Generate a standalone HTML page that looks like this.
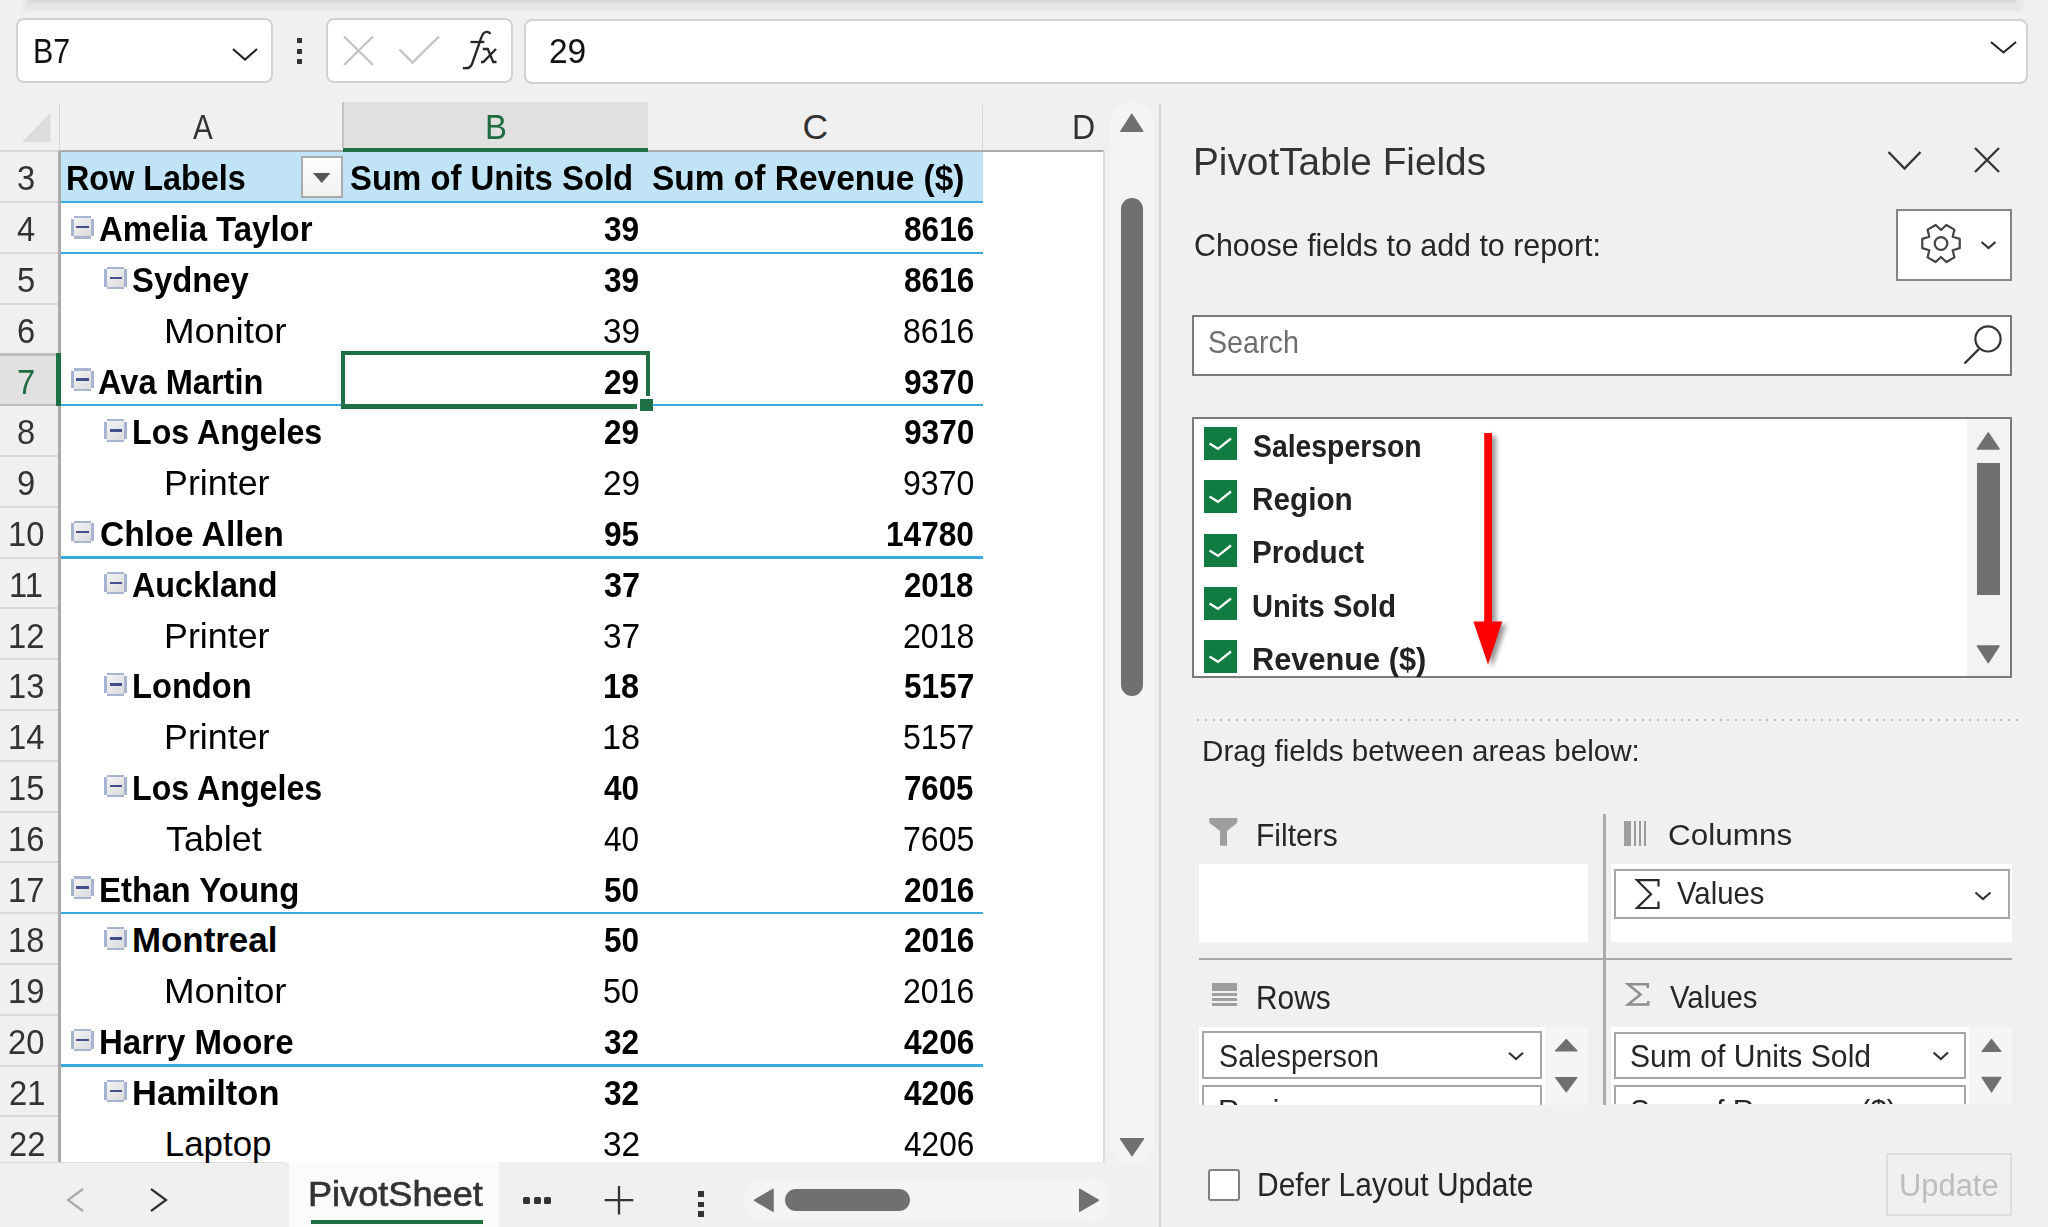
<!DOCTYPE html>
<html><head><meta charset="utf-8"><style>
html,body{margin:0;padding:0;}
body{width:2048px;height:1227px;position:relative;overflow:hidden;background:#f0f0f0;font-family:"Liberation Sans",sans-serif;}
.b{position:absolute;}
.t{position:absolute;white-space:pre;line-height:1;transform-origin:0 0;color:#000;}
</style></head><body>
<div class=b style="left:28.00px;top:0.00px;width:1988.00px;height:13.00px;background:linear-gradient(#d8d8d8 0px,#dbdbdb 2px,#e4e4e4 3px,#e8e8e8 9px,#eeeeee 11px,#f0f0f0 13px);"></div>
<div class=b style="left:20.00px;top:0.00px;width:8.00px;height:12.00px;background:linear-gradient(90deg,rgba(216,216,216,0),rgba(216,216,216,0.5));"></div>
<div class=b style="left:2016.00px;top:0.00px;width:10.00px;height:12.00px;background:linear-gradient(90deg,rgba(216,216,216,0.5),rgba(216,216,216,0));"></div>
<div class=b style="left:15.50px;top:18.00px;width:257.50px;height:65.00px;background:#fff;border:2px solid #d2d2d2;border-radius:8px;box-sizing:border-box;"></div>
<svg class=b style="left:225.00px;top:40.00px;" width="40.00" height="28.00" viewBox="225.00 40.00 40.00 28.00"><polyline points="233,49 245,59.5 257,49" fill="none" stroke="#222" stroke-width="2.1"/></svg>
<div class=b style="left:297.25px;top:38.00px;width:5.00px;height:5.00px;background:#333;"></div>
<div class=b style="left:297.25px;top:48.50px;width:5.00px;height:5.00px;background:#333;"></div>
<div class=b style="left:297.25px;top:58.75px;width:5.00px;height:5.00px;background:#333;"></div>
<div class=b style="left:325.50px;top:18.00px;width:187.00px;height:65.00px;background:#fff;border:2px solid #d2d2d2;border-radius:8px;box-sizing:border-box;"></div>
<svg class=b style="left:335.00px;top:28.00px;" width="115.00" height="47.00" viewBox="335.00 28.00 115.00 47.00"><path d="M344,36.5 L373,65 M373,36.5 L344,65" stroke="#c3c3c3" stroke-width="2.4" fill="none"/><polyline points="399.5,49.5 412.5,62.5 439,36.5" fill="none" stroke="#c3c3c3" stroke-width="2.4"/></svg>
<svg class=b style="left:455.00px;top:25.00px;" width="50.00" height="50.00" viewBox="455.00 25.00 50.00 50.00"><path d="M490.5,34 C489,31.5 485.5,31.3 483.6,33.2 C482.2,34.6 481.6,36.5 481,38.5 L472.2,63.5 C471.2,66.5 469,68.2 466,68.2 L462.8,68.2" fill="none" stroke="#262626" stroke-width="2.3"/><path d="M470.5,42 H484.3" stroke="#262626" stroke-width="2.3"/><path d="M482.8,49 H487.8 L493.2,62 H496.5 M496,49 L483.3,62 H481" fill="none" stroke="#262626" stroke-width="2.3"/></svg>
<div class=b style="left:524.00px;top:18.50px;width:1504.00px;height:65.00px;background:#fff;border:2px solid #d2d2d2;border-radius:8px;box-sizing:border-box;"></div>
<svg class=b style="left:1980.00px;top:32.00px;" width="45.00" height="30.00" viewBox="1980.00 32.00 45.00 30.00"><polyline points="1991,42 2003.5,52.5 2016,42" fill="none" stroke="#222" stroke-width="2.1"/></svg>
<div class=b style="left:61.00px;top:152.00px;width:1042.50px;height:1009.50px;background:#fff;"></div>
<div class=b style="left:343.00px;top:102.00px;width:304.50px;height:46.00px;background:#e0e0e0;"></div>
<div class=b style="left:342.00px;top:102.00px;width:2.00px;height:46.00px;background:#c4c4c4;"></div>
<div class=b style="left:981.50px;top:105.00px;width:1.30px;height:46.00px;background:#d6d6d6;"></div>
<div class=b style="left:59.00px;top:104.00px;width:1.20px;height:47.00px;background:#d6d6d6;"></div>
<div class=b style="left:60.00px;top:150.00px;width:1044.00px;height:2.00px;background:#ababab;"></div>
<div class=b style="left:0.00px;top:150.30px;width:60.00px;height:1.70px;background:#d6d6d6;"></div>
<div class=b style="left:343.00px;top:147.50px;width:304.50px;height:4.50px;background:#1f7145;"></div>
<svg class=b style="left:20.00px;top:110.00px;" width="32.00" height="34.00" viewBox="20.00 110.00 32.00 34.00"><polygon points="22,142 50.6,142 50.6,112.5" fill="#dcdcdc"/></svg>
<div class=b style="left:58.30px;top:151.00px;width:2.70px;height:1010.50px;background:#ababab;"></div>
<div class=b style="left:0.00px;top:201.00px;width:58.30px;height:2.00px;background:#d9d9d9;"></div>
<div class=b style="left:0.00px;top:251.80px;width:58.30px;height:2.00px;background:#d9d9d9;"></div>
<div class=b style="left:0.00px;top:302.60px;width:58.30px;height:2.00px;background:#d9d9d9;"></div>
<div class=b style="left:0.00px;top:353.40px;width:58.30px;height:2.00px;background:#d9d9d9;"></div>
<div class=b style="left:0.00px;top:404.20px;width:58.30px;height:2.00px;background:#d9d9d9;"></div>
<div class=b style="left:0.00px;top:455.00px;width:58.30px;height:2.00px;background:#d9d9d9;"></div>
<div class=b style="left:0.00px;top:505.80px;width:58.30px;height:2.00px;background:#d9d9d9;"></div>
<div class=b style="left:0.00px;top:556.60px;width:58.30px;height:2.00px;background:#d9d9d9;"></div>
<div class=b style="left:0.00px;top:607.40px;width:58.30px;height:2.00px;background:#d9d9d9;"></div>
<div class=b style="left:0.00px;top:658.20px;width:58.30px;height:2.00px;background:#d9d9d9;"></div>
<div class=b style="left:0.00px;top:709.00px;width:58.30px;height:2.00px;background:#d9d9d9;"></div>
<div class=b style="left:0.00px;top:759.80px;width:58.30px;height:2.00px;background:#d9d9d9;"></div>
<div class=b style="left:0.00px;top:810.60px;width:58.30px;height:2.00px;background:#d9d9d9;"></div>
<div class=b style="left:0.00px;top:861.40px;width:58.30px;height:2.00px;background:#d9d9d9;"></div>
<div class=b style="left:0.00px;top:912.20px;width:58.30px;height:2.00px;background:#d9d9d9;"></div>
<div class=b style="left:0.00px;top:963.00px;width:58.30px;height:2.00px;background:#d9d9d9;"></div>
<div class=b style="left:0.00px;top:1013.80px;width:58.30px;height:2.00px;background:#d9d9d9;"></div>
<div class=b style="left:0.00px;top:1064.60px;width:58.30px;height:2.00px;background:#d9d9d9;"></div>
<div class=b style="left:0.00px;top:1115.40px;width:58.30px;height:2.00px;background:#d9d9d9;"></div>
<div class=b style="left:0.00px;top:1166.20px;width:58.30px;height:2.00px;background:#d9d9d9;"></div>
<div class=b style="left:0.00px;top:355.40px;width:58.30px;height:48.80px;background:#e1e1e1;"></div>
<div class=b style="left:0.00px;top:353.40px;width:56.00px;height:2.50px;background:#bdbdbd;"></div>
<div class=b style="left:0.00px;top:403.70px;width:56.00px;height:2.50px;background:#bdbdbd;"></div>
<div class=b style="left:56.00px;top:353.40px;width:5.00px;height:52.80px;background:#1f7145;"></div>
<div class=b style="left:1103.00px;top:151.00px;width:2.00px;height:1010.50px;background:#dcdcdc;"></div>
<div class=b style="left:61.00px;top:152.00px;width:922.00px;height:49.00px;background:#c0e4f5;"></div>
<div class=b style="left:61.00px;top:200.70px;width:922.00px;height:2.60px;background:#38a8dd;"></div>
<div class=b style="left:61.00px;top:251.50px;width:922.00px;height:2.60px;background:#38a8dd;"></div>
<div class=b style="left:61.00px;top:403.90px;width:922.00px;height:2.60px;background:#38a8dd;"></div>
<div class=b style="left:61.00px;top:556.30px;width:922.00px;height:2.60px;background:#38a8dd;"></div>
<div class=b style="left:61.00px;top:911.90px;width:922.00px;height:2.60px;background:#38a8dd;"></div>
<div class=b style="left:61.00px;top:1064.30px;width:922.00px;height:2.60px;background:#38a8dd;"></div>
<div class=b style="left:300.50px;top:155.60px;width:42.50px;height:42.00px;background:linear-gradient(#fdfdfd,#f1f1f1);border:2px solid #ababab;box-sizing:border-box;"></div>
<svg class=b style="left:310.00px;top:170.00px;" width="24.00" height="16.00" viewBox="310.00 170.00 24.00 16.00"><polygon points="313,173 330.5,173 321.75,183" fill="#555"/></svg>
<div class=b style="left:73.60px;top:218.00px;width:17.80px;height:18.60px;background:linear-gradient(135deg,#f4f4f4,#dadada);"></div>
<div class=b style="left:74.10px;top:216.00px;width:16.80px;height:2.30px;background:#a6b4d2;"></div>
<div class=b style="left:74.10px;top:236.30px;width:16.80px;height:2.30px;background:#a6b4d2;"></div>
<div class=b style="left:71.10px;top:218.60px;width:2.80px;height:17.40px;background:#a6b4d2;"></div>
<div class=b style="left:91.10px;top:218.60px;width:2.80px;height:17.40px;background:#a6b4d2;"></div>
<div class=b style="left:76.30px;top:225.90px;width:12.60px;height:2.50px;background:#434e8c;"></div>
<div class=b style="left:73.60px;top:370.40px;width:17.80px;height:18.60px;background:linear-gradient(135deg,#f4f4f4,#dadada);"></div>
<div class=b style="left:74.10px;top:368.40px;width:16.80px;height:2.30px;background:#a6b4d2;"></div>
<div class=b style="left:74.10px;top:388.70px;width:16.80px;height:2.30px;background:#a6b4d2;"></div>
<div class=b style="left:71.10px;top:371.00px;width:2.80px;height:17.40px;background:#a6b4d2;"></div>
<div class=b style="left:91.10px;top:371.00px;width:2.80px;height:17.40px;background:#a6b4d2;"></div>
<div class=b style="left:76.30px;top:378.30px;width:12.60px;height:2.50px;background:#434e8c;"></div>
<div class=b style="left:73.60px;top:522.80px;width:17.80px;height:18.60px;background:linear-gradient(135deg,#f4f4f4,#dadada);"></div>
<div class=b style="left:74.10px;top:520.80px;width:16.80px;height:2.30px;background:#a6b4d2;"></div>
<div class=b style="left:74.10px;top:541.10px;width:16.80px;height:2.30px;background:#a6b4d2;"></div>
<div class=b style="left:71.10px;top:523.40px;width:2.80px;height:17.40px;background:#a6b4d2;"></div>
<div class=b style="left:91.10px;top:523.40px;width:2.80px;height:17.40px;background:#a6b4d2;"></div>
<div class=b style="left:76.30px;top:530.70px;width:12.60px;height:2.50px;background:#434e8c;"></div>
<div class=b style="left:73.60px;top:878.40px;width:17.80px;height:18.60px;background:linear-gradient(135deg,#f4f4f4,#dadada);"></div>
<div class=b style="left:74.10px;top:876.40px;width:16.80px;height:2.30px;background:#a6b4d2;"></div>
<div class=b style="left:74.10px;top:896.70px;width:16.80px;height:2.30px;background:#a6b4d2;"></div>
<div class=b style="left:71.10px;top:879.00px;width:2.80px;height:17.40px;background:#a6b4d2;"></div>
<div class=b style="left:91.10px;top:879.00px;width:2.80px;height:17.40px;background:#a6b4d2;"></div>
<div class=b style="left:76.30px;top:886.30px;width:12.60px;height:2.50px;background:#434e8c;"></div>
<div class=b style="left:73.60px;top:1030.80px;width:17.80px;height:18.60px;background:linear-gradient(135deg,#f4f4f4,#dadada);"></div>
<div class=b style="left:74.10px;top:1028.80px;width:16.80px;height:2.30px;background:#a6b4d2;"></div>
<div class=b style="left:74.10px;top:1049.10px;width:16.80px;height:2.30px;background:#a6b4d2;"></div>
<div class=b style="left:71.10px;top:1031.40px;width:2.80px;height:17.40px;background:#a6b4d2;"></div>
<div class=b style="left:91.10px;top:1031.40px;width:2.80px;height:17.40px;background:#a6b4d2;"></div>
<div class=b style="left:76.30px;top:1038.70px;width:12.60px;height:2.50px;background:#434e8c;"></div>
<div class=b style="left:106.80px;top:268.80px;width:17.80px;height:18.60px;background:linear-gradient(135deg,#f4f4f4,#dadada);"></div>
<div class=b style="left:107.30px;top:266.80px;width:16.80px;height:2.30px;background:#a6b4d2;"></div>
<div class=b style="left:107.30px;top:287.10px;width:16.80px;height:2.30px;background:#a6b4d2;"></div>
<div class=b style="left:104.30px;top:269.40px;width:2.80px;height:17.40px;background:#a6b4d2;"></div>
<div class=b style="left:124.30px;top:269.40px;width:2.80px;height:17.40px;background:#a6b4d2;"></div>
<div class=b style="left:109.50px;top:276.70px;width:12.60px;height:2.50px;background:#434e8c;"></div>
<div class=b style="left:106.80px;top:421.20px;width:17.80px;height:18.60px;background:linear-gradient(135deg,#f4f4f4,#dadada);"></div>
<div class=b style="left:107.30px;top:419.20px;width:16.80px;height:2.30px;background:#a6b4d2;"></div>
<div class=b style="left:107.30px;top:439.50px;width:16.80px;height:2.30px;background:#a6b4d2;"></div>
<div class=b style="left:104.30px;top:421.80px;width:2.80px;height:17.40px;background:#a6b4d2;"></div>
<div class=b style="left:124.30px;top:421.80px;width:2.80px;height:17.40px;background:#a6b4d2;"></div>
<div class=b style="left:109.50px;top:429.10px;width:12.60px;height:2.50px;background:#434e8c;"></div>
<div class=b style="left:106.80px;top:573.60px;width:17.80px;height:18.60px;background:linear-gradient(135deg,#f4f4f4,#dadada);"></div>
<div class=b style="left:107.30px;top:571.60px;width:16.80px;height:2.30px;background:#a6b4d2;"></div>
<div class=b style="left:107.30px;top:591.90px;width:16.80px;height:2.30px;background:#a6b4d2;"></div>
<div class=b style="left:104.30px;top:574.20px;width:2.80px;height:17.40px;background:#a6b4d2;"></div>
<div class=b style="left:124.30px;top:574.20px;width:2.80px;height:17.40px;background:#a6b4d2;"></div>
<div class=b style="left:109.50px;top:581.50px;width:12.60px;height:2.50px;background:#434e8c;"></div>
<div class=b style="left:106.80px;top:675.20px;width:17.80px;height:18.60px;background:linear-gradient(135deg,#f4f4f4,#dadada);"></div>
<div class=b style="left:107.30px;top:673.20px;width:16.80px;height:2.30px;background:#a6b4d2;"></div>
<div class=b style="left:107.30px;top:693.50px;width:16.80px;height:2.30px;background:#a6b4d2;"></div>
<div class=b style="left:104.30px;top:675.80px;width:2.80px;height:17.40px;background:#a6b4d2;"></div>
<div class=b style="left:124.30px;top:675.80px;width:2.80px;height:17.40px;background:#a6b4d2;"></div>
<div class=b style="left:109.50px;top:683.10px;width:12.60px;height:2.50px;background:#434e8c;"></div>
<div class=b style="left:106.80px;top:776.80px;width:17.80px;height:18.60px;background:linear-gradient(135deg,#f4f4f4,#dadada);"></div>
<div class=b style="left:107.30px;top:774.80px;width:16.80px;height:2.30px;background:#a6b4d2;"></div>
<div class=b style="left:107.30px;top:795.10px;width:16.80px;height:2.30px;background:#a6b4d2;"></div>
<div class=b style="left:104.30px;top:777.40px;width:2.80px;height:17.40px;background:#a6b4d2;"></div>
<div class=b style="left:124.30px;top:777.40px;width:2.80px;height:17.40px;background:#a6b4d2;"></div>
<div class=b style="left:109.50px;top:784.70px;width:12.60px;height:2.50px;background:#434e8c;"></div>
<div class=b style="left:106.80px;top:929.20px;width:17.80px;height:18.60px;background:linear-gradient(135deg,#f4f4f4,#dadada);"></div>
<div class=b style="left:107.30px;top:927.20px;width:16.80px;height:2.30px;background:#a6b4d2;"></div>
<div class=b style="left:107.30px;top:947.50px;width:16.80px;height:2.30px;background:#a6b4d2;"></div>
<div class=b style="left:104.30px;top:929.80px;width:2.80px;height:17.40px;background:#a6b4d2;"></div>
<div class=b style="left:124.30px;top:929.80px;width:2.80px;height:17.40px;background:#a6b4d2;"></div>
<div class=b style="left:109.50px;top:937.10px;width:12.60px;height:2.50px;background:#434e8c;"></div>
<div class=b style="left:106.80px;top:1081.60px;width:17.80px;height:18.60px;background:linear-gradient(135deg,#f4f4f4,#dadada);"></div>
<div class=b style="left:107.30px;top:1079.60px;width:16.80px;height:2.30px;background:#a6b4d2;"></div>
<div class=b style="left:107.30px;top:1099.90px;width:16.80px;height:2.30px;background:#a6b4d2;"></div>
<div class=b style="left:104.30px;top:1082.20px;width:2.80px;height:17.40px;background:#a6b4d2;"></div>
<div class=b style="left:124.30px;top:1082.20px;width:2.80px;height:17.40px;background:#a6b4d2;"></div>
<div class=b style="left:109.50px;top:1089.50px;width:12.60px;height:2.50px;background:#434e8c;"></div>
<div class=b style="left:341.30px;top:350.80px;width:309.10px;height:58.00px;border:4.7px solid #1f7145;box-sizing:border-box;"></div>
<div class=b style="left:341.30px;top:403.60px;width:298.70px;height:5.20px;background:#1f7145;"></div>
<div class=b style="left:637.40px;top:396.40px;width:15.50px;height:17.50px;background:#fff;"></div>
<div class=b style="left:640.10px;top:399.00px;width:12.80px;height:12.40px;background:#1f7145;"></div>
<div class=b style="left:1110.00px;top:101.40px;width:43.60px;height:1064.60px;background:#f4f4f4;border-radius:22px;"></div>
<svg class=b style="left:1118.00px;top:112.00px;" width="28.00" height="22.00" viewBox="1118.00 112.00 28.00 22.00"><polygon points="1120.8,131.3 1142.8,131.3 1131.8,114.5" fill="#707070" stroke="#707070" stroke-width="1.5" stroke-linejoin="round"/></svg>
<div class=b style="left:1120.80px;top:198.00px;width:22.50px;height:498.00px;background:#707070;border-radius:11px;"></div>
<svg class=b style="left:1118.00px;top:1136.00px;" width="28.00" height="22.00" viewBox="1118.00 1136.00 28.00 22.00"><polygon points="1120.5,1138.7 1143.5,1138.7 1132,1155.6" fill="#707070" stroke="#707070" stroke-width="1.5" stroke-linejoin="round"/></svg>
<div class=b style="left:1159.00px;top:104.00px;width:2.20px;height:1123.00px;background:#d4d4d4;"></div>
<div class=b style="left:0.00px;top:1161.50px;width:289.00px;height:65.50px;background:#f0f0f0;border-top-right-radius:8px;border-top:1.5px solid #dcdcdc;box-sizing:border-box;"></div>
<div class=b style="left:289.00px;top:1161.50px;width:209.50px;height:65.50px;background:#fbfbfb;"></div>
<div class=b style="left:498.50px;top:1161.50px;width:660.50px;height:65.50px;background:#f0f0f0;"></div>
<svg class=b style="left:60.00px;top:1183.00px;" width="30.00" height="33.00" viewBox="60.00 1183.00 30.00 33.00"><polyline points="83,1189 68,1200 83,1211" fill="none" stroke="#a8a8a8" stroke-width="2.2"/></svg>
<svg class=b style="left:145.00px;top:1183.00px;" width="27.00" height="33.00" viewBox="145.00 1183.00 27.00 33.00"><polyline points="151,1189 166,1200 151,1211" fill="none" stroke="#333" stroke-width="2.2"/></svg>
<div class=b style="left:311.00px;top:1219.50px;width:171.50px;height:4.80px;background:#1f7145;"></div>
<div class=b style="left:523.00px;top:1196.50px;width:7.40px;height:7.50px;background:#333;border-radius:1.5px;"></div>
<div class=b style="left:533.50px;top:1196.50px;width:7.40px;height:7.50px;background:#333;border-radius:1.5px;"></div>
<div class=b style="left:544.00px;top:1196.50px;width:7.40px;height:7.50px;background:#333;border-radius:1.5px;"></div>
<svg class=b style="left:600.00px;top:1182.00px;" width="40.00" height="36.00" viewBox="600.00 1182.00 40.00 36.00"><path d="M604.7,1200.2 H633.3 M619,1185.9 V1214.6" stroke="#333" stroke-width="2.3"/></svg>
<div class=b style="left:698.30px;top:1191.00px;width:5.70px;height:5.70px;background:#333;"></div>
<div class=b style="left:698.30px;top:1201.50px;width:5.70px;height:5.70px;background:#333;"></div>
<div class=b style="left:698.30px;top:1211.30px;width:5.70px;height:5.70px;background:#333;"></div>
<div class=b style="left:742.80px;top:1179.20px;width:367.20px;height:42.10px;background:#f4f4f4;border-radius:21px;"></div>
<svg class=b style="left:750.00px;top:1186.00px;" width="27.00" height="28.00" viewBox="750.00 1186.00 27.00 28.00"><polygon points="773,1189.3 773,1211.2 754.6,1200.25" fill="#707070" stroke="#707070" stroke-width="1.5" stroke-linejoin="round"/></svg>
<div class=b style="left:785.00px;top:1189.30px;width:124.60px;height:21.90px;background:#707070;border-radius:11px;"></div>
<svg class=b style="left:1076.00px;top:1186.00px;" width="26.00" height="28.00" viewBox="1076.00 1186.00 26.00 28.00"><polygon points="1079.7,1189.3 1079.7,1211.2 1098.3,1200.25" fill="#707070" stroke="#707070" stroke-width="1.5" stroke-linejoin="round"/></svg>
<svg class=b style="left:1880.00px;top:140.00px;" width="50.00" height="38.00" viewBox="1880.00 140.00 50.00 38.00"><polyline points="1888.5,152 1904.5,168.5 1920.5,152" fill="none" stroke="#333" stroke-width="2.3"/></svg>
<svg class=b style="left:1968.00px;top:140.00px;" width="40.00" height="40.00" viewBox="1968.00 140.00 40.00 40.00"><path d="M1975,148 L1999,172 M1999,148 L1975,172" stroke="#333" stroke-width="2.3"/></svg>
<div class=b style="left:1896.00px;top:208.80px;width:116.00px;height:72.50px;background:#fff;border:2.2px solid #868686;box-sizing:border-box;"></div>
<svg class=b style="left:1915.00px;top:218.00px;" width="53.00" height="52.00" viewBox="1915.00 218.00 53.00 52.00"><polygon points="1959.73,238.83 1959.73,248.17 1952.69,250.25 1954.41,257.38 1946.32,262.05 1941.00,257.00 1935.68,262.05 1927.59,257.38 1929.31,250.25 1922.27,248.17 1922.27,238.83 1929.31,236.75 1927.59,229.62 1935.68,224.95 1941.00,230.00 1946.32,224.95 1954.41,229.62 1952.69,236.75" fill="none" stroke="#444" stroke-width="2.2" stroke-linejoin="round"/><circle cx="1941" cy="243.5" r="6.3" fill="none" stroke="#444" stroke-width="2.2"/></svg>
<svg class=b style="left:1976.00px;top:236.00px;" width="26.00" height="18.00" viewBox="1976.00 236.00 26.00 18.00"><polyline points="1981.5,242 1988.5,248 1995.5,242" fill="none" stroke="#333" stroke-width="2.2"/></svg>
<div class=b style="left:1192.00px;top:315.00px;width:820.00px;height:60.60px;background:#fff;border:2px solid #7a7a7a;box-sizing:border-box;"></div>
<svg class=b style="left:1955.00px;top:318.00px;" width="53.00" height="54.00" viewBox="1955.00 318.00 53.00 54.00"><circle cx="1988" cy="338.9" r="12.6" fill="none" stroke="#333" stroke-width="2.2"/><path d="M1979,349 L1964.5,363.5" stroke="#333" stroke-width="2.4"/></svg>
<div class=b style="left:1192.00px;top:416.70px;width:820.00px;height:261.50px;background:#fff;border:2px solid #7a7a7a;box-sizing:border-box;"></div>
<div class=b style="left:1967.00px;top:419.00px;width:43.00px;height:257.20px;background:#f3f3f3;"></div>
<svg class=b style="left:1972.00px;top:428.00px;" width="32.00" height="24.00" viewBox="1972.00 428.00 32.00 24.00"><polygon points="1977.5,449 1999,449 1988.25,433" fill="#707070" stroke="#707070" stroke-width="1.5" stroke-linejoin="round"/></svg>
<div class=b style="left:1977.40px;top:462.60px;width:22.60px;height:132.40px;background:#707070;"></div>
<svg class=b style="left:1972.00px;top:642.00px;" width="32.00" height="26.00" viewBox="1972.00 642.00 32.00 26.00"><polygon points="1977.5,646 1999,646 1988.25,662.5" fill="#707070" stroke="#707070" stroke-width="1.5" stroke-linejoin="round"/></svg>
<div class=b style="left:1204.40px;top:426.50px;width:33.00px;height:33.00px;background:#107c41;"></div>
<svg class=b style="left:1204.40px;top:426.50px;" width="33.00" height="33.00" viewBox="1204.40 426.50 33.00 33.00"><polyline points="1209.90,443.10 1218.40,448.30 1231.40,438.00" fill="none" stroke="#fff" stroke-width="2.3"/></svg>
<div class=b style="left:1204.40px;top:480.10px;width:33.00px;height:33.00px;background:#107c41;"></div>
<svg class=b style="left:1204.40px;top:480.10px;" width="33.00" height="33.00" viewBox="1204.40 480.10 33.00 33.00"><polyline points="1209.90,496.70 1218.40,501.90 1231.40,491.60" fill="none" stroke="#fff" stroke-width="2.3"/></svg>
<div class=b style="left:1204.40px;top:533.70px;width:33.00px;height:33.00px;background:#107c41;"></div>
<svg class=b style="left:1204.40px;top:533.70px;" width="33.00" height="33.00" viewBox="1204.40 533.70 33.00 33.00"><polyline points="1209.90,550.30 1218.40,555.50 1231.40,545.20" fill="none" stroke="#fff" stroke-width="2.3"/></svg>
<div class=b style="left:1204.40px;top:587.10px;width:33.00px;height:33.00px;background:#107c41;"></div>
<svg class=b style="left:1204.40px;top:587.10px;" width="33.00" height="33.00" viewBox="1204.40 587.10 33.00 33.00"><polyline points="1209.90,603.70 1218.40,608.90 1231.40,598.60" fill="none" stroke="#fff" stroke-width="2.3"/></svg>
<div class=b style="left:1204.40px;top:640.30px;width:33.00px;height:33.00px;background:#107c41;"></div>
<svg class=b style="left:1204.40px;top:640.30px;" width="33.00" height="33.00" viewBox="1204.40 640.30 33.00 33.00"><polyline points="1209.90,656.90 1218.40,662.10 1231.40,651.80" fill="none" stroke="#fff" stroke-width="2.3"/></svg>
<svg class=b style="left:1465.00px;top:425.00px;filter:drop-shadow(4px 3px 2.5px rgba(0,0,0,0.42));" width="50.00" height="255.00" viewBox="1465.00 425.00 50.00 255.00"><path d="M1488.1,433 V624" stroke="#ff0000" stroke-width="7.8"/><polygon points="1473.4,621.4 1502.3,621.4 1488,664.4" fill="#ff0000"/></svg>
<div class=b style="left:1196.80px;top:719.30px;width:827.20px;height:2.00px;background:repeating-linear-gradient(90deg,#bdbdbd 0 2px,transparent 2px 7.8px);"></div>
<svg class=b style="left:1205.00px;top:814.00px;" width="37.00" height="36.00" viewBox="1205.00 814.00 37.00 36.00"><polygon points="1209.3,818.1 1237.3,818.1 1237.3,822.7 1227,831 1227,845.7 1220,845.7 1220,831 1209.3,822.7" fill="#9e9e9e"/></svg>
<div class=b style="left:1199.00px;top:864.00px;width:388.70px;height:78.00px;background:#fff;"></div>
<div class=b style="left:1603.20px;top:813.50px;width:2.80px;height:291.10px;background:#ababab;"></div>
<div class=b style="left:1199.00px;top:957.50px;width:813.00px;height:2.00px;background:#a8a8a8;"></div>
<div class=b style="left:1623.80px;top:820.60px;width:7.20px;height:25.20px;background:#9e9e9e;"></div>
<div class=b style="left:1634.00px;top:820.60px;width:2.20px;height:25.20px;background:#9a9a9a;"></div>
<div class=b style="left:1639.10px;top:820.60px;width:2.20px;height:25.20px;background:#9a9a9a;"></div>
<div class=b style="left:1644.10px;top:820.60px;width:2.20px;height:25.20px;background:#9a9a9a;"></div>
<div class=b style="left:1611.20px;top:863.80px;width:401.00px;height:78.20px;background:#fff;"></div>
<div class=b style="left:1613.50px;top:868.70px;width:396.50px;height:50.50px;background:#fff;border:2px solid #a6a6a6;box-sizing:border-box;"></div>
<svg class=b style="left:1630.00px;top:874.00px;" width="35.00" height="40.00" viewBox="1630.00 874.00 35.00 40.00"><path d="M1658.5,886.5 V880.2 H1637 L1651,894.2 L1637,908 H1658.5 V901.5" fill="none" stroke="#2a2a2a" stroke-width="2.2"/></svg>
<svg class=b style="left:1970.00px;top:886.00px;" width="26.00" height="18.00" viewBox="1970.00 886.00 26.00 18.00"><polyline points="1975.5,892.5 1983,899 1990.5,892.5" fill="none" stroke="#333" stroke-width="2.2"/></svg>
<div class=b style="left:1212.10px;top:983.00px;width:25.00px;height:7.70px;background:#9e9e9e;"></div>
<div class=b style="left:1212.10px;top:993.10px;width:25.00px;height:2.70px;background:#9e9e9e;"></div>
<div class=b style="left:1212.10px;top:998.20px;width:25.00px;height:2.70px;background:#9e9e9e;"></div>
<div class=b style="left:1212.10px;top:1003.20px;width:25.00px;height:2.70px;background:#9e9e9e;"></div>
<div class=b style="left:1199.20px;top:1026.70px;width:345.60px;height:77.90px;background:#fff;"></div>
<div class=b style="left:1544.80px;top:1026.70px;width:43.10px;height:77.90px;background:#f5f5f5;"></div>
<div class=b style="left:1202.30px;top:1031.40px;width:340.00px;height:48.00px;background:#fff;border:2px solid #a6a6a6;box-sizing:border-box;"></div>
<div class=b style="left:1202.30px;top:1085.10px;width:340.00px;height:19.50px;background:#fff;border:2px solid #a6a6a6;box-sizing:border-box;border-bottom:none;"></div>
<svg class=b style="left:1503.00px;top:1048.00px;" width="27.00" height="16.00" viewBox="1503.00 1048.00 27.00 16.00"><polyline points="1509,1052.8 1516,1059 1523,1052.8" fill="none" stroke="#333" stroke-width="2.2"/></svg>
<svg class=b style="left:1550.00px;top:1035.00px;" width="32.00" height="61.00" viewBox="1550.00 1035.00 32.00 61.00"><polygon points="1555.5,1051 1577,1051 1566.25,1039.5" fill="#707070" stroke="#707070" stroke-width="1.2" stroke-linejoin="round"/><polygon points="1555.5,1077.5 1577,1077.5 1566.25,1092" fill="#707070" stroke="#707070" stroke-width="1.2" stroke-linejoin="round"/></svg>
<svg class=b style="left:1620.00px;top:978.00px;" width="35.00" height="34.00" viewBox="1620.00 978.00 35.00 34.00"><path d="M1647.8,988 V984.3 H1628 L1640.6,994.4 L1628,1004.6 H1648.2 V1001" fill="none" stroke="#8e8e8e" stroke-width="2.5"/></svg>
<div class=b style="left:1611.00px;top:1026.70px;width:358.30px;height:77.70px;background:#fff;"></div>
<div class=b style="left:1969.30px;top:1026.70px;width:43.10px;height:77.70px;background:#f5f5f5;"></div>
<div class=b style="left:1613.60px;top:1031.80px;width:352.80px;height:47.40px;background:#fff;border:2px solid #a6a6a6;box-sizing:border-box;"></div>
<div class=b style="left:1613.60px;top:1085.10px;width:352.80px;height:19.30px;background:#fff;border:2px solid #a6a6a6;box-sizing:border-box;border-bottom:none;"></div>
<svg class=b style="left:1927.00px;top:1047.00px;" width="28.00" height="17.00" viewBox="1927.00 1047.00 28.00 17.00"><polyline points="1933.5,1052.5 1940.8,1059 1948,1052.5" fill="none" stroke="#333" stroke-width="2.2"/></svg>
<svg class=b style="left:1976.00px;top:1034.00px;" width="31.00" height="62.00" viewBox="1976.00 1034.00 31.00 62.00"><polygon points="1982,1051.5 2001,1051.5 1991.5,1039.3" fill="#707070" stroke="#707070" stroke-width="1.2" stroke-linejoin="round"/><polygon points="1982,1077.3 2001,1077.3 1991.5,1092" fill="#707070" stroke="#707070" stroke-width="1.2" stroke-linejoin="round"/></svg>
<div class=b style="left:1207.60px;top:1169.00px;width:32.00px;height:31.60px;background:#fff;border:2.2px solid #808080;border-radius:3px;box-sizing:border-box;"></div>
<div class=b style="left:1885.70px;top:1153.30px;width:126.20px;height:62.90px;border:2.2px solid #dedede;box-sizing:border-box;"></div>
<div class=t style="left:33.03px;top:34.00px;font-size:35.46px;color:#111;transform:scaleX(0.8564);">B7</div>
<div class=t style="left:549.11px;top:34.00px;font-size:35.46px;color:#111;transform:scaleX(0.9444);">29</div>
<div class=t style="left:193.00px;top:110.00px;font-size:35.46px;color:#333;transform:scaleX(0.8333);">A</div>
<div class=t style="left:485.22px;top:110.00px;font-size:35.46px;color:#1f6b40;transform:scaleX(0.9263);">B</div>
<div class=t style="left:802.50px;top:110.00px;font-size:35.46px;color:#333;">C</div>
<div class=t style="left:1071.89px;top:110.00px;font-size:35.46px;color:#333;transform:scaleX(0.9048);">D</div>
<div class=t style="left:17.40px;top:160.40px;font-size:35.18px;color:#333;transform:scaleX(0.9300);">3</div>
<div class=t style="left:17.40px;top:211.20px;font-size:35.18px;color:#333;transform:scaleX(0.9300);">4</div>
<div class=t style="left:17.40px;top:262.00px;font-size:35.18px;color:#333;transform:scaleX(0.9300);">5</div>
<div class=t style="left:17.40px;top:312.80px;font-size:35.18px;color:#333;transform:scaleX(0.9300);">6</div>
<div class=t style="left:17.40px;top:363.60px;font-size:35.18px;color:#1f6b40;transform:scaleX(0.9300);">7</div>
<div class=t style="left:17.40px;top:414.40px;font-size:35.18px;color:#333;transform:scaleX(0.9300);">8</div>
<div class=t style="left:17.40px;top:465.20px;font-size:35.18px;color:#333;transform:scaleX(0.9300);">9</div>
<div class=t style="left:7.63px;top:516.00px;font-size:35.18px;color:#333;transform:scaleX(0.9300);">10</div>
<div class=t style="left:9.03px;top:566.80px;font-size:35.18px;color:#333;transform:scaleX(0.9300);">11</div>
<div class=t style="left:8.10px;top:617.60px;font-size:35.18px;color:#333;transform:scaleX(0.9300);">12</div>
<div class=t style="left:7.63px;top:668.40px;font-size:35.18px;color:#333;transform:scaleX(0.9300);">13</div>
<div class=t style="left:7.63px;top:719.20px;font-size:35.18px;color:#333;transform:scaleX(0.9300);">14</div>
<div class=t style="left:7.63px;top:770.00px;font-size:35.18px;color:#333;transform:scaleX(0.9300);">15</div>
<div class=t style="left:7.63px;top:820.80px;font-size:35.18px;color:#333;transform:scaleX(0.9300);">16</div>
<div class=t style="left:8.10px;top:871.60px;font-size:35.18px;color:#333;transform:scaleX(0.9300);">17</div>
<div class=t style="left:7.63px;top:922.40px;font-size:35.18px;color:#333;transform:scaleX(0.9300);">18</div>
<div class=t style="left:7.63px;top:973.20px;font-size:35.18px;color:#333;transform:scaleX(0.9300);">19</div>
<div class=t style="left:8.10px;top:1024.00px;font-size:35.18px;color:#333;transform:scaleX(0.9300);">20</div>
<div class=t style="left:8.56px;top:1074.80px;font-size:35.18px;color:#333;transform:scaleX(0.9300);">21</div>
<div class=t style="left:8.56px;top:1125.60px;font-size:35.18px;color:#333;transform:scaleX(0.9300);">22</div>
<div class=t style="left:65.74px;top:161.30px;font-size:34.89px;font-weight:700;transform:scaleX(0.9277);">Row Labels</div>
<div class=t style="left:349.96px;top:161.30px;font-size:34.89px;font-weight:700;transform:scaleX(0.9431);">Sum of Units Sold</div>
<div class=t style="left:652.44px;top:161.30px;font-size:34.89px;font-weight:700;transform:scaleX(0.9598);">Sum of Revenue ($)</div>
<div class=t style="left:98.86px;top:212.10px;font-size:34.89px;font-weight:700;transform:scaleX(0.9440);">Amelia Taylor</div>
<div class=t style="left:603.79px;top:212.10px;font-size:34.89px;font-weight:700;transform:scaleX(0.9054);">39</div>
<div class=t style="left:904.09px;top:212.10px;font-size:34.89px;font-weight:700;transform:scaleX(0.9067);">8616</div>
<div class=t style="left:131.86px;top:262.90px;font-size:34.89px;font-weight:700;transform:scaleX(0.9407);">Sydney</div>
<div class=t style="left:603.79px;top:262.90px;font-size:34.89px;font-weight:700;transform:scaleX(0.9054);">39</div>
<div class=t style="left:904.09px;top:262.90px;font-size:34.89px;font-weight:700;transform:scaleX(0.9067);">8616</div>
<div class=t style="left:163.74px;top:313.70px;font-size:34.89px;transform:scaleX(1.0540);">Monitor</div>
<div class=t style="left:602.79px;top:313.70px;font-size:34.89px;transform:scaleX(0.9571);">39</div>
<div class=t style="left:903.16px;top:313.70px;font-size:34.89px;transform:scaleX(0.9189);">8616</div>
<div class=t style="left:98.37px;top:364.50px;font-size:34.89px;font-weight:700;transform:scaleX(0.9345);">Ava Martin</div>
<div class=t style="left:603.79px;top:364.50px;font-size:34.89px;font-weight:700;transform:scaleX(0.9054);">29</div>
<div class=t style="left:904.09px;top:364.50px;font-size:34.89px;font-weight:700;transform:scaleX(0.9067);">9370</div>
<div class=t style="left:131.65px;top:415.30px;font-size:34.89px;font-weight:700;transform:scaleX(0.9232);">Los Angeles</div>
<div class=t style="left:603.79px;top:415.30px;font-size:34.89px;font-weight:700;transform:scaleX(0.9054);">29</div>
<div class=t style="left:904.09px;top:415.30px;font-size:34.89px;font-weight:700;transform:scaleX(0.9067);">9370</div>
<div class=t style="left:164.12px;top:466.10px;font-size:34.89px;transform:scaleX(1.0273);">Printer</div>
<div class=t style="left:602.79px;top:466.10px;font-size:34.89px;transform:scaleX(0.9571);">29</div>
<div class=t style="left:903.16px;top:466.10px;font-size:34.89px;transform:scaleX(0.9189);">9370</div>
<div class=t style="left:99.94px;top:516.90px;font-size:34.89px;font-weight:700;transform:scaleX(0.9649);">Chloe Allen</div>
<div class=t style="left:603.79px;top:516.90px;font-size:34.89px;font-weight:700;transform:scaleX(0.9054);">95</div>
<div class=t style="left:885.94px;top:516.90px;font-size:34.89px;font-weight:700;transform:scaleX(0.9069);">14780</div>
<div class=t style="left:131.67px;top:567.70px;font-size:34.89px;font-weight:700;transform:scaleX(0.9260);">Auckland</div>
<div class=t style="left:603.77px;top:567.70px;font-size:34.89px;font-weight:700;transform:scaleX(0.9306);">37</div>
<div class=t style="left:904.11px;top:567.70px;font-size:34.89px;font-weight:700;transform:scaleX(0.8947);">2018</div>
<div class=t style="left:164.12px;top:618.50px;font-size:34.89px;transform:scaleX(1.0273);">Printer</div>
<div class=t style="left:602.79px;top:618.50px;font-size:34.89px;transform:scaleX(0.9571);">37</div>
<div class=t style="left:903.16px;top:618.50px;font-size:34.89px;transform:scaleX(0.9189);">2018</div>
<div class=t style="left:132.13px;top:669.30px;font-size:34.89px;font-weight:700;transform:scaleX(0.9363);">London</div>
<div class=t style="left:602.84px;top:669.30px;font-size:34.89px;font-weight:700;transform:scaleX(0.9306);">18</div>
<div class=t style="left:904.09px;top:669.30px;font-size:34.89px;font-weight:700;transform:scaleX(0.9067);">5157</div>
<div class=t style="left:164.12px;top:720.10px;font-size:34.89px;transform:scaleX(1.0273);">Printer</div>
<div class=t style="left:601.74px;top:720.10px;font-size:34.89px;transform:scaleX(0.9853);">18</div>
<div class=t style="left:903.16px;top:720.10px;font-size:34.89px;transform:scaleX(0.9189);">5157</div>
<div class=t style="left:131.65px;top:770.90px;font-size:34.89px;font-weight:700;transform:scaleX(0.9232);">Los Angeles</div>
<div class=t style="left:603.79px;top:770.90px;font-size:34.89px;font-weight:700;transform:scaleX(0.9054);">40</div>
<div class=t style="left:904.11px;top:770.90px;font-size:34.89px;font-weight:700;transform:scaleX(0.8947);">7605</div>
<div class=t style="left:165.97px;top:821.70px;font-size:34.89px;transform:scaleX(1.0283);">Tablet</div>
<div class=t style="left:603.79px;top:821.70px;font-size:34.89px;transform:scaleX(0.9054);">40</div>
<div class=t style="left:903.16px;top:821.70px;font-size:34.89px;transform:scaleX(0.9189);">7605</div>
<div class=t style="left:99.31px;top:872.50px;font-size:34.89px;font-weight:700;transform:scaleX(0.9457);">Ethan Young</div>
<div class=t style="left:603.79px;top:872.50px;font-size:34.89px;font-weight:700;transform:scaleX(0.9054);">50</div>
<div class=t style="left:904.09px;top:872.50px;font-size:34.89px;font-weight:700;transform:scaleX(0.9067);">2016</div>
<div class=t style="left:132.00px;top:923.30px;font-size:34.89px;font-weight:700;">Montreal</div>
<div class=t style="left:603.79px;top:923.30px;font-size:34.89px;font-weight:700;transform:scaleX(0.9054);">50</div>
<div class=t style="left:904.09px;top:923.30px;font-size:34.89px;font-weight:700;transform:scaleX(0.9067);">2016</div>
<div class=t style="left:163.74px;top:974.10px;font-size:34.89px;transform:scaleX(1.0540);">Monitor</div>
<div class=t style="left:602.84px;top:974.10px;font-size:34.89px;transform:scaleX(0.9306);">50</div>
<div class=t style="left:903.16px;top:974.10px;font-size:34.89px;transform:scaleX(0.9189);">2016</div>
<div class=t style="left:99.31px;top:1024.90px;font-size:34.89px;font-weight:700;transform:scaleX(0.9470);">Harry Moore</div>
<div class=t style="left:603.79px;top:1024.90px;font-size:34.89px;font-weight:700;transform:scaleX(0.9054);">32</div>
<div class=t style="left:904.09px;top:1024.90px;font-size:34.89px;font-weight:700;transform:scaleX(0.9067);">4206</div>
<div class=t style="left:132.02px;top:1075.70px;font-size:34.89px;font-weight:700;transform:scaleX(0.9883);">Hamilton</div>
<div class=t style="left:603.79px;top:1075.70px;font-size:34.89px;font-weight:700;transform:scaleX(0.9054);">32</div>
<div class=t style="left:904.09px;top:1075.70px;font-size:34.89px;font-weight:700;transform:scaleX(0.9067);">4206</div>
<div class=t style="left:164.80px;top:1126.50px;font-size:34.89px;">Laptop</div>
<div class=t style="left:602.79px;top:1126.50px;font-size:34.89px;transform:scaleX(0.9571);">32</div>
<div class=t style="left:904.09px;top:1126.50px;font-size:34.89px;transform:scaleX(0.9067);">4206</div>
<div class=t style="left:308.19px;top:1177.25px;font-size:35.46px;color:#333;transform:scaleX(1.0193);-webkit-text-stroke:0.7px #333;">PivotSheet</div>
<div class=t style="left:1193.27px;top:142.00px;font-size:39.01px;color:#333;transform:scaleX(0.9940);">PivotTable Fields</div>
<div class=t style="left:1194.10px;top:230.25px;font-size:31.91px;color:#262626;transform:scaleX(0.9521);">Choose fields to add to report:</div>
<div class=t style="left:1208.18px;top:326.80px;font-size:31.49px;color:#6e6e6e;transform:scaleX(0.9104);">Search</div>
<div class=t style="left:1252.70px;top:430.50px;font-size:31.49px;font-weight:700;color:#222;transform:scaleX(0.9005);">Salesperson</div>
<div class=t style="left:1251.71px;top:483.90px;font-size:31.49px;font-weight:700;color:#222;transform:scaleX(0.9437);">Region</div>
<div class=t style="left:1251.72px;top:537.30px;font-size:31.49px;font-weight:700;color:#222;transform:scaleX(0.9419);">Product</div>
<div class=t style="left:1251.75px;top:590.70px;font-size:31.49px;font-weight:700;color:#222;transform:scaleX(0.9250);">Units Sold</div>
<div class=t style="left:1251.65px;top:644.10px;font-size:31.49px;font-weight:700;color:#222;transform:scaleX(0.9766);">Revenue ($)</div>
<div class=t style="left:1201.62px;top:736.10px;font-size:29.93px;color:#262626;transform:scaleX(0.9895);">Drag fields between areas below:</div>
<div class=t style="left:1255.71px;top:819.50px;font-size:31.21px;color:#262626;transform:scaleX(0.9630);">Filters</div>
<div class=t style="left:1668.42px;top:819.80px;font-size:30.21px;color:#262626;transform:scaleX(1.0414);">Columns</div>
<div class=t style="left:1677.20px;top:878.00px;font-size:31.63px;color:#262626;transform:scaleX(0.9258);">Values</div>
<div class=t style="left:1255.98px;top:981.80px;font-size:32.91px;color:#262626;transform:scaleX(0.9077);">Rows</div>
<div class=t style="left:1670.00px;top:981.70px;font-size:31.06px;color:#262626;transform:scaleX(0.9429);">Values</div>
<div class=t style="left:1218.60px;top:1039.60px;font-size:32.06px;color:#262626;transform:scaleX(0.8977);">Salesperson</div>
<div class=t style="left:1217.61px;top:1094.80px;font-size:32.06px;color:#262626;transform:scaleX(0.9300);height:9.80px;overflow:hidden;">Region</div>
<div class=t style="left:1629.82px;top:1039.80px;font-size:32.06px;color:#262626;transform:scaleX(0.9399);">Sum of Units Sold</div>
<div class=t style="left:1629.84px;top:1094.80px;font-size:32.06px;color:#262626;transform:scaleX(0.9300);height:9.60px;overflow:hidden;">Sum of Revenue ($)</div>
<div class=t style="left:1256.62px;top:1169.20px;font-size:32.34px;color:#262626;transform:scaleX(0.9269);">Defer Layout Update</div>
<div class=t style="left:1898.82px;top:1170.00px;font-size:31.21px;color:#bdbdbd;transform:scaleX(0.9897);">Update</div>
</body></html>
